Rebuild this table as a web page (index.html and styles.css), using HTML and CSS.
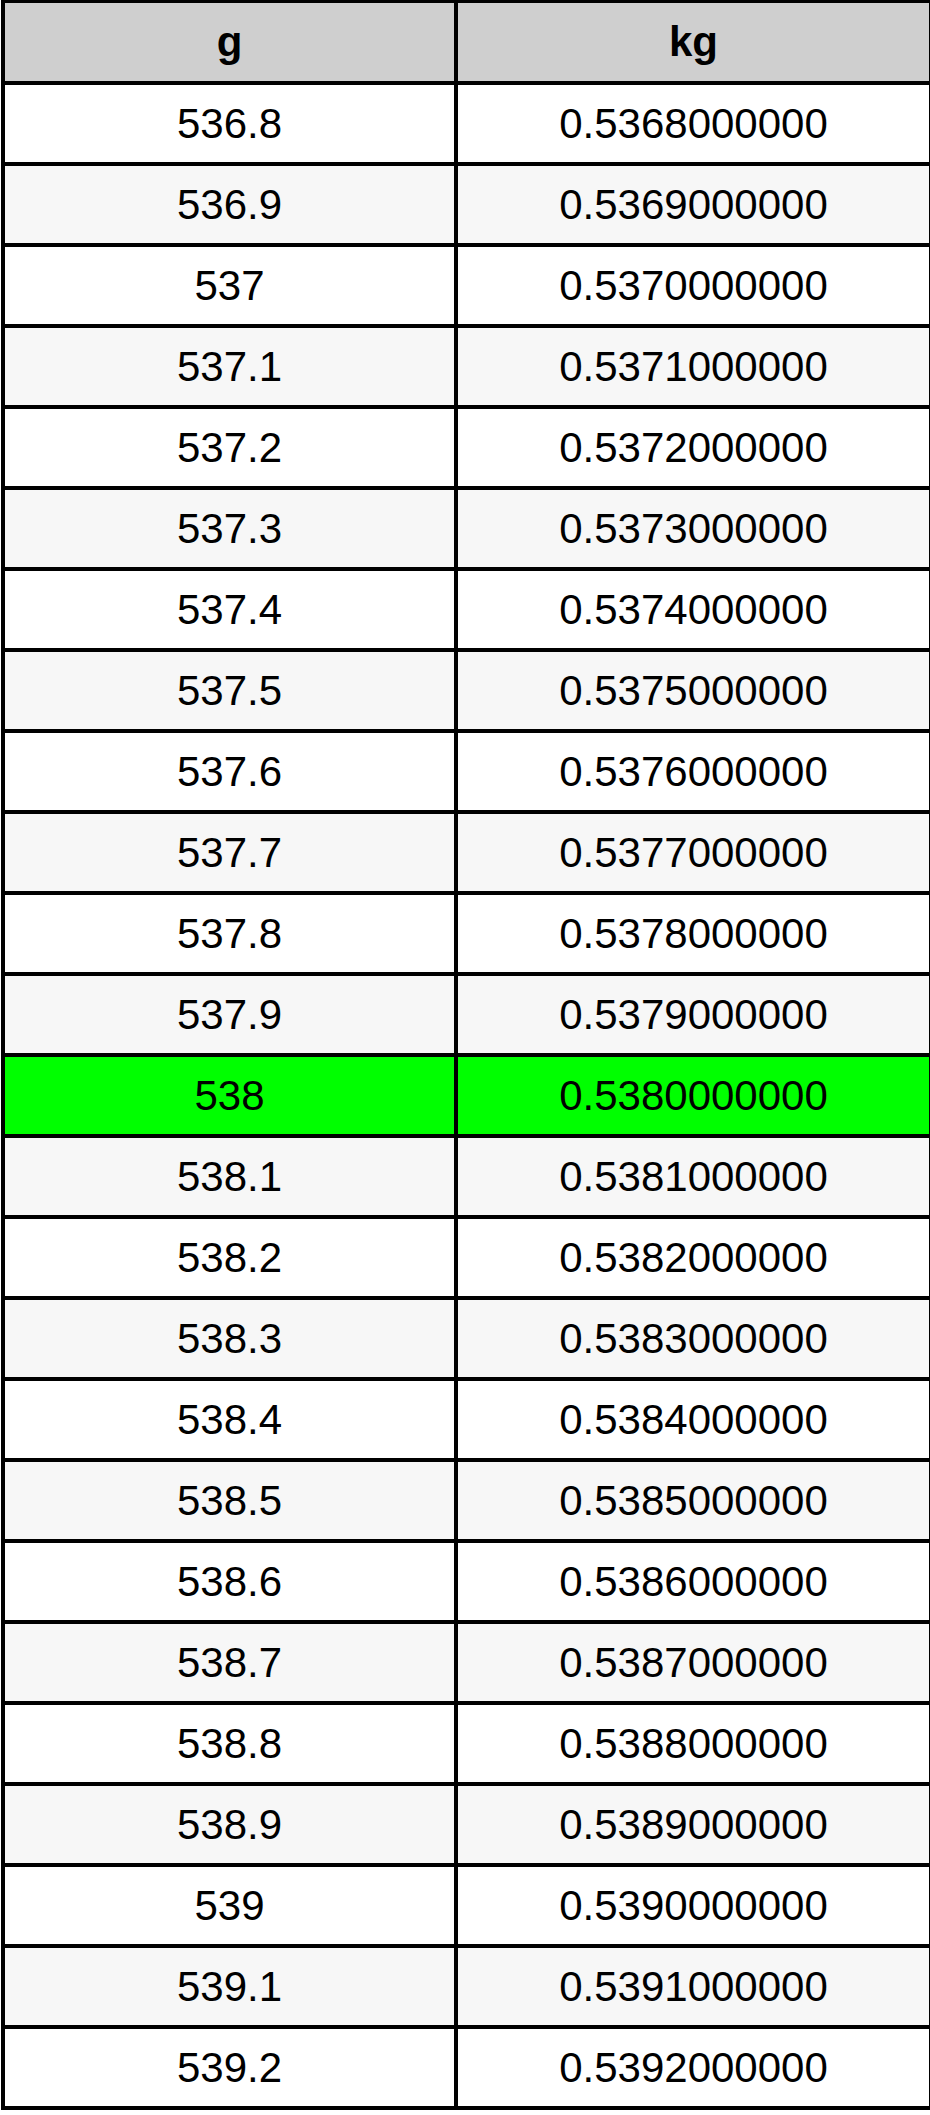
FILE: index.html
```html
<!DOCTYPE html>
<html>
<head>
<meta charset="utf-8">
<link rel="stylesheet" href="styles.css">
</head>
<body>
<table class="conv">
<colgroup><col class="c1"><col class="c2"></colgroup>
<thead>
<tr><th>g</th><th>kg</th></tr>
</thead>
<tbody>
<tr><td>536.8</td><td>0.5368000000</td></tr>
<tr class="alt"><td>536.9</td><td>0.5369000000</td></tr>
<tr><td>537</td><td>0.5370000000</td></tr>
<tr class="alt"><td>537.1</td><td>0.5371000000</td></tr>
<tr><td>537.2</td><td>0.5372000000</td></tr>
<tr class="alt"><td>537.3</td><td>0.5373000000</td></tr>
<tr><td>537.4</td><td>0.5374000000</td></tr>
<tr class="alt"><td>537.5</td><td>0.5375000000</td></tr>
<tr><td>537.6</td><td>0.5376000000</td></tr>
<tr class="alt"><td>537.7</td><td>0.5377000000</td></tr>
<tr><td>537.8</td><td>0.5378000000</td></tr>
<tr class="alt"><td>537.9</td><td>0.5379000000</td></tr>
<tr class="hl"><td>538</td><td>0.5380000000</td></tr>
<tr class="alt"><td>538.1</td><td>0.5381000000</td></tr>
<tr><td>538.2</td><td>0.5382000000</td></tr>
<tr class="alt"><td>538.3</td><td>0.5383000000</td></tr>
<tr><td>538.4</td><td>0.5384000000</td></tr>
<tr class="alt"><td>538.5</td><td>0.5385000000</td></tr>
<tr><td>538.6</td><td>0.5386000000</td></tr>
<tr class="alt"><td>538.7</td><td>0.5387000000</td></tr>
<tr><td>538.8</td><td>0.5388000000</td></tr>
<tr class="alt"><td>538.9</td><td>0.5389000000</td></tr>
<tr><td>539</td><td>0.5390000000</td></tr>
<tr class="alt"><td>539.1</td><td>0.5391000000</td></tr>
<tr><td>539.2</td><td>0.5392000000</td></tr>
</tbody>
</table>
</body>
</html>
```
FILE: styles.css
```css
html, body {
  margin: 0;
  padding: 0;
  background: #fff;
}
.conv {
  border-collapse: collapse;
  table-layout: fixed;
  width: 928px;
  margin: -1px 0 0 1px;
  font-family: "Liberation Sans", Arial, sans-serif;
  color: #000;
}
.c1 { width: 453px; }
.c2 { width: 475px; }
.conv th,
.conv td {
  border: 4px solid #000;
  padding: 0;
  text-align: center;
  font-size: 42px;
  line-height: 77px;
}
.conv th {
  background: #cfcfcf;
  font-weight: bold;
  line-height: 78px;
}
.conv td { background: #fff; }
.conv tr.alt td { background: #f7f7f7; }
.conv tr.hl td { background: #00ff00; }
```
